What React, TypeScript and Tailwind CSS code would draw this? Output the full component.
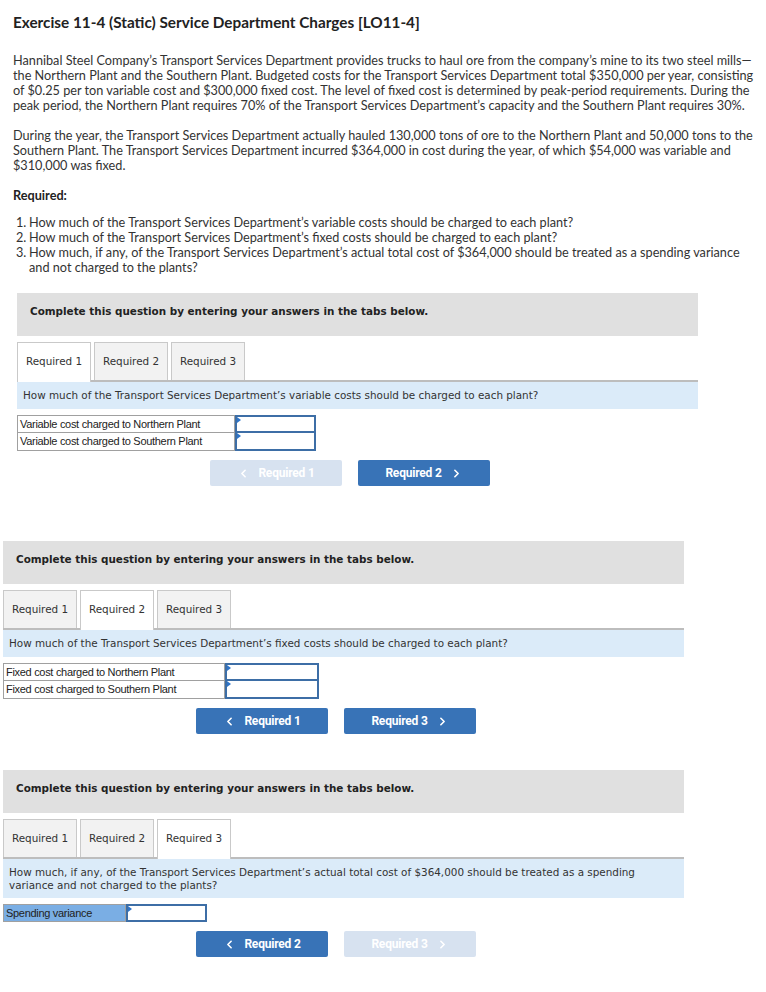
import { ChevronLeft, ChevronRight } from "lucide-react";

type Row = { label: string };

type SectionProps = {
  left: number;
  active: number;
  prompt: string;
  rows: Row[];
  labelW: number;
  inputW: number;
  highlightLabel?: boolean;
  tightPrompt?: boolean;
  prev: { label: string; enabled: boolean };
  next: { label: string; enabled: boolean };
};

const sans = { fontFamily: "Lato, 'Open Sans', sans-serif" };
const verdana = { fontFamily: "'DejaVu Sans', Verdana, sans-serif" };
const arial = { fontFamily: "'Liberation Sans', Arial, sans-serif" };
const btnFont = { fontFamily: "Roboto, 'Liberation Sans', sans-serif" };

function NavButton({ label, enabled, dir }: { label: string; enabled: boolean; dir: "prev" | "next" }) {
  return (
    <button
      className={`w-[132px] h-[26px] rounded-[2px] flex items-center justify-center gap-2 text-[12px] font-bold text-white ${
        enabled ? "bg-[#3873b7]" : "bg-[#d7e2f0]"
      }`}
      style={btnFont}
    >
      {dir === "prev" && <ChevronLeft size={13} strokeWidth={3} />}
      <span className="tracking-[-0.2px]">{label}</span>
      {dir === "next" && <ChevronRight size={13} strokeWidth={3} />}
    </button>
  );
}

function Section({ left, active, prompt, rows, labelW, inputW, highlightLabel, tightPrompt, prev, next }: SectionProps) {
  const tabs = ["Required 1", "Required 2", "Required 3"];
  return (
    <div className="w-[681px]" style={{ marginLeft: left }}>
      <div className="bg-[#e0e0e0] h-[43px] pt-[11px] pl-[13px]">
        <p className="text-[10.4px] font-bold text-[#222]" style={verdana}>
          Complete this question by entering your answers in the tabs below.
        </p>
      </div>

      {/* tabs */}
      <div className="flex gap-[3px] mt-[6px]">
        {tabs.map((t, i) => (
          <div
            key={t}
            className={`w-[74px] flex items-center justify-center text-[10.4px] text-[#333] border border-[#c9c9c9] border-b-0 ${
              i + 1 === active ? "bg-white relative z-10 -mb-[2px] h-[40px]" : "bg-[#f2f2f2] h-[38px]"
            }`}
            style={verdana}
          >
            <span className={i + 1 === active ? "-mt-[2px]" : ""}>{t}</span>
          </div>
        ))}
      </div>

      <div
        className={`border-t-2 border-[#bdbdbd] bg-[#dbebf9] px-[6px] pt-[7px] text-[10.4px] leading-[13px] text-[#333] ${
          tightPrompt ? "pb-[6px]" : "pb-[7px]"
        }`}
        style={verdana}
      >
        {prompt}
      </div>

      {/* answer table */}
      <div className="mt-[6px] flex flex-col text-[11px] text-[#222]" style={arial}>
        {rows.map((r, i) => (
          <div key={r.label} className="flex h-[18px]">
            <div
              className={`border border-[#a0a0a0] px-[2px] leading-[16px] tracking-[-0.3px] ${
                highlightLabel ? "bg-[#7aaee4]" : "bg-white"
              } ${i > 0 ? "border-t-0 h-[18px]" : ""}`}
              style={{ width: labelW }}
            >
              {r.label}
            </div>
            <div
              className={`relative border-2 border-[#3d6ea6] bg-white ${i > 0 ? "border-t-0" : ""}`}
              style={{ width: inputW }}
            >
              <span className="absolute left-0 top-0 w-0 h-0 border-t-[3px] border-b-[3px] border-l-[4px] border-t-transparent border-b-transparent border-l-[#2f75c9]" />
            </div>
          </div>
        ))}
      </div>

      <div className="flex gap-4 ml-[193px] mt-[9px]">
        <NavButton label={prev.label} enabled={prev.enabled} dir="prev" />
        <NavButton label={next.label} enabled={next.enabled} dir="next" />
      </div>
    </div>
  );
}

export default function App() {
  return (
    <div className="w-[766px] min-h-[992px] bg-white pt-[12px] pb-8 text-[#333]" style={sans}>
      <h1 className="px-[13px] text-[15.3px] leading-[20px] font-bold text-[#222]">
        Exercise 11-4 (Static) Service Department Charges [LO11-4]
      </h1>

      <div className="pl-[13px] text-[12.7px] leading-[15px] text-[#333]">
        <p className="mt-[21px]">
          <span className="block whitespace-nowrap">Hannibal Steel Company’s Transport Services Department provides trucks to haul ore from the company’s mine to its two steel mills—</span>
          <span className="block whitespace-nowrap">the Northern Plant and the Southern Plant. Budgeted costs for the Transport Services Department total $350,000 per year, consisting</span>
          <span className="block whitespace-nowrap">of $0.25 per ton variable cost and $300,000 fixed cost. The level of fixed cost is determined by peak-period requirements. During the</span>
          <span className="block whitespace-nowrap">peak period, the Northern Plant requires 70% of the Transport Services Department’s capacity and the Southern Plant requires 30%.</span>
        </p>
        <p className="mt-[15px]">
          <span className="block whitespace-nowrap">During the year, the Transport Services Department actually hauled 130,000 tons of ore to the Northern Plant and 50,000 tons to the</span>
          <span className="block whitespace-nowrap">Southern Plant. The Transport Services Department incurred $364,000 in cost during the year, of which $54,000 was variable and</span>
          <span className="block whitespace-nowrap">$310,000 was fixed.</span>
        </p>
        <p className="mt-[15px] font-bold text-[#222]">Required:</p>
        <ol className="mt-[12px] pl-[3px]">
          <li className="flex"><span className="w-[13px] shrink-0">1.</span><span>How much of the Transport Services Department’s variable costs should be charged to each plant?</span></li>
          <li className="flex"><span className="w-[13px] shrink-0">2.</span><span>How much of the Transport Services Department’s fixed costs should be charged to each plant?</span></li>
          <li className="flex">
            <span className="w-[13px] shrink-0">3.</span>
            <span>
              <span className="block whitespace-nowrap">How much, if any, of the Transport Services Department’s actual total cost of $364,000 should be treated as a spending variance</span>
              <span className="block">and not charged to the plants?</span>
            </span>
          </li>
        </ol>
      </div>

      <div className="mt-[18px]">
        <Section
          left={17}
          active={1}
          prompt="How much of the Transport Services Department’s variable costs should be charged to each plant?"
          rows={[{ label: "Variable cost charged to Northern Plant" }, { label: "Variable cost charged to Southern Plant" }]}
          labelW={218}
          inputW={81}
          prev={{ label: "Required 1", enabled: false }}
          next={{ label: "Required 2", enabled: true }}
        />
      </div>

      <div className="mt-[55px]">
        <Section
          left={3}
          active={2}
          prompt="How much of the Transport Services Department’s fixed costs should be charged to each plant?"
          rows={[{ label: "Fixed cost charged to Northern Plant" }, { label: "Fixed cost charged to Southern Plant" }]}
          labelW={222}
          inputW={94}
          prev={{ label: "Required 1", enabled: true }}
          next={{ label: "Required 3", enabled: true }}
        />
      </div>

      <div className="mt-[36px]">
        <Section
          left={3}
          active={3}
          prompt="How much, if any, of the Transport Services Department’s actual total cost of $364,000 should be treated as a spending variance and not charged to the plants?"
          rows={[{ label: "Spending variance" }]}
          labelW={123}
          inputW={81}
          highlightLabel
          tightPrompt
          prev={{ label: "Required 2", enabled: true }}
          next={{ label: "Required 3", enabled: false }}
        />
      </div>
    </div>
  );
}
